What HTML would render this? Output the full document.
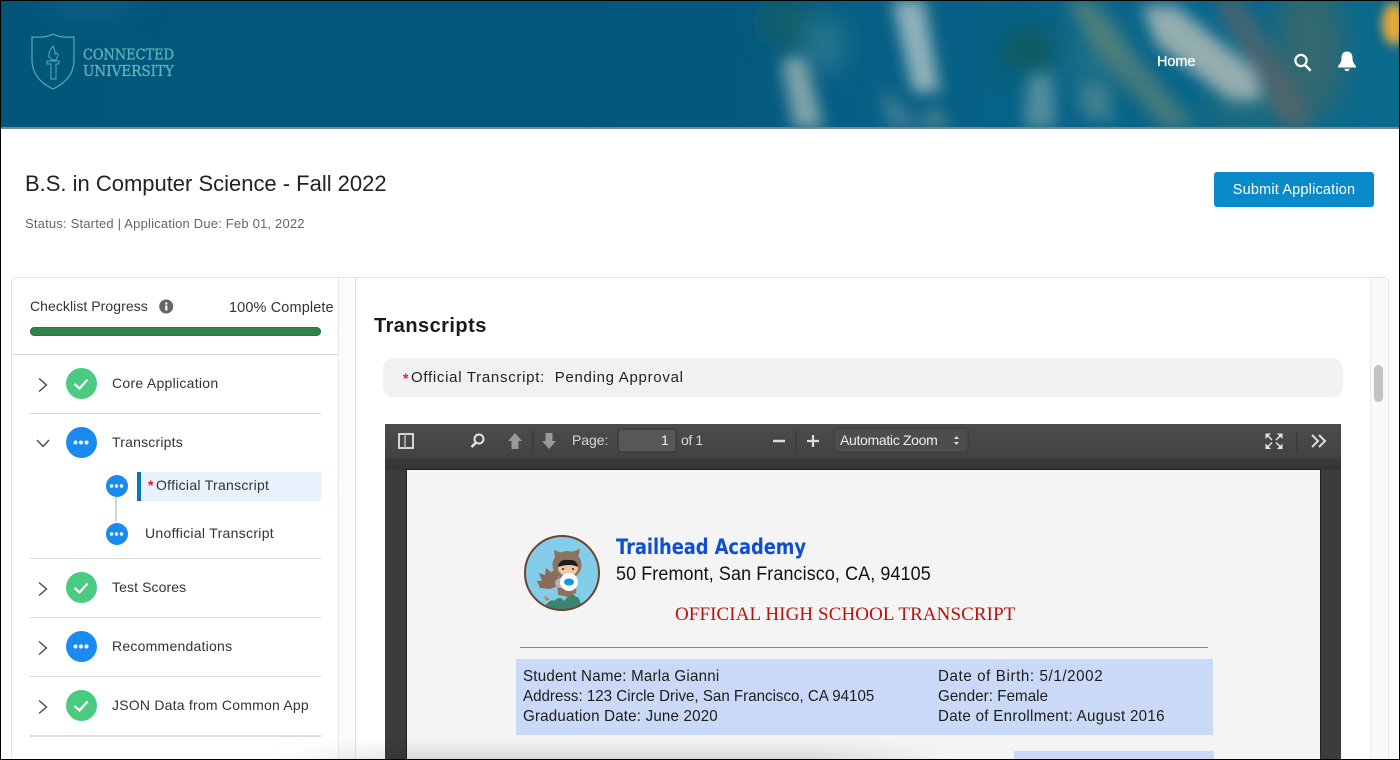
<!DOCTYPE html>
<html><head><meta charset="utf-8"><title>Connected University</title>
<style>
html,body{margin:0;padding:0;background:#fff}
#p{position:relative;width:1400px;height:760px;overflow:hidden;background:#fff;font-family:"Liberation Sans",sans-serif;color:#2b2b2b}
.a{position:absolute}
.t{position:absolute;white-space:nowrap;line-height:1}
.sb{font-size:14px;color:#333;letter-spacing:.28px}
.ln{position:absolute;left:30px;width:291px;height:1px;background:#dcdcdc}
.c{position:absolute;border-radius:50%}
.pdf{font-size:16px;color:#1c1c1c;transform:scaleX(.945);transform-origin:0 0}
.tb{color:#d8d8d8;font-size:14px}
</style></head><body><div id="p">

<svg class="a" style="left:0;top:0" width="1400" height="128" viewBox="0 0 1400 128">
<defs>
<linearGradient id="g" x1="0" x2="1" y1="0" y2="0"><stop offset="0" stop-color="#04557a"/><stop offset=".5" stop-color="#04577d"/><stop offset=".62" stop-color="#065f85"/><stop offset="1" stop-color="#0a6a8c"/></linearGradient>
<filter id="b1" x="-50%" y="-50%" width="200%" height="200%"><feGaussianBlur stdDeviation="7.5"/></filter>
<filter id="b2" x="-50%" y="-50%" width="200%" height="200%"><feGaussianBlur stdDeviation="14"/></filter>
<filter id="b3" x="-80%" y="-50%" width="260%" height="200%"><feGaussianBlur stdDeviation="5"/></filter>
</defs>
<rect width="1400" height="128" fill="url(#g)"/>
<ellipse cx="90" cy="8" rx="50" ry="14" fill="#0f6c85" opacity=".5" filter="url(#b2)"/>
<g filter="url(#b2)">
<ellipse cx="785" cy="22" rx="24" ry="24" fill="#1a5f5a" opacity=".7"/>
<ellipse cx="1028" cy="50" rx="26" ry="24" fill="#15574e" opacity=".75"/>
<ellipse cx="825" cy="45" rx="18" ry="28" fill="#3c8a96" opacity=".7"/>
<ellipse cx="1095" cy="55" rx="25" ry="50" fill="#3b7f86" opacity=".45"/>
<ellipse cx="1310" cy="50" rx="35" ry="70" fill="#50685c" opacity=".6"/>
<ellipse cx="1240" cy="110" rx="35" ry="25" fill="#336f72" opacity=".5"/>
</g>
<g filter="url(#b1)">
<path d="M892 0L924 0L940 92L913 92Z" fill="#a8c0c2" opacity=".85"/>
<path d="M1142 6L1176 6L1254 70L1262 100L1230 100L1156 44Z" fill="#a4b5b3" opacity=".9"/>
<path d="M781 60L805 56L824 128L794 128Z" fill="#9cb5b2" opacity=".8"/>
<path d="M1028 76L1052 72L1056 128L1024 128Z" fill="#7ba4a9" opacity=".65"/>
<path d="M1078 85L1107 85L1114 122L1084 118Z" fill="#5d8f96" opacity=".6"/>
<path d="M925 128L880 85L888 128Z" fill="#8aa6a6" opacity=".4"/>
<path d="M922 128L932 105L952 128Z" fill="#a2a98a" opacity=".5"/>
<path d="M1065 0L1092 0L1162 85L1197 128L1163 128L1103 60Z" fill="#7d8f72" opacity=".5"/>
<path d="M1213 0L1242 0L1297 90L1314 128L1283 128Z" fill="#74655c" opacity=".55"/>
</g>
<ellipse cx="1394" cy="24" rx="12" ry="21" fill="#e8a93a" filter="url(#b3)"/>
<path d="M32 37Q46 38 53 34Q60 38 74 37L74 60Q74 79 53 89Q32 79 32 60Z" fill="none" stroke="#53adb0" stroke-width="1.200"/>
<path d="M53 46Q48 52 49 57L52 60L56 60L58 55Q57 52 55 54Q55 50 53 46Z" fill="none" stroke="#53adb0" stroke-width="1"/>
<path d="M47 61H59V64H56V79H51V64H47Z" fill="none" stroke="#53adb0" stroke-width="1"/>
<text x="83" y="59.500" font-family="'DejaVu Serif',serif" font-size="15" fill="#5ab6b9" stroke="#5ab6b9" stroke-width=".35" textLength="91" lengthAdjust="spacingAndGlyphs">CONNECTED</text>
<text x="83" y="76" font-family="'DejaVu Serif',serif" font-size="15" fill="#5ab6b9" stroke="#5ab6b9" stroke-width=".35" textLength="91" lengthAdjust="spacingAndGlyphs">UNIVERSITY</text>
<circle cx="1301" cy="60.500" r="5.600" fill="none" stroke="#fff" stroke-width="2.200"/>
<path d="M1305 65L1310 70" stroke="#fff" stroke-width="2.400" stroke-linecap="round"/>
<path d="M1347 51.500C1351 51.500 1352.500 54.500 1352.500 58C1352.500 62 1354 64 1356 66V67.500H1338V66C1340 64 1341.500 62 1341.500 58C1341.500 54.500 1343 51.500 1347 51.500Z" fill="#fff"/>
<path d="M1344.500 68.700H1349.500A2.500 2.500 0 0 1 1344.500 68.700Z" fill="#fff"/>
</svg>
<div class="t" style="left:1157px;top:55px;font-size:14.5px;color:#fff;letter-spacing:-.1px;-webkit-text-stroke:.25px #fff">Home</div>
<div class="a" style="left:0;top:127px;width:1400px;height:1.5px;background:#7b858b"></div>

<div class="t" style="left:25px;top:173px;font-size:22px;color:#222;letter-spacing:-.01px">B.S. in Computer Science - Fall 2022</div>
<div class="t" style="left:25px;top:217px;font-size:13px;color:#666;letter-spacing:.19px">Status: Started | Application Due: Feb 01, 2022</div>
<div class="a" style="left:1214px;top:172px;width:160px;height:35px;background:#0a8ac8;border-radius:3px;color:#fff;font-size:14.5px;line-height:37px;text-align:center;letter-spacing:.18px">Submit Application</div>

<!-- panel frame -->
<div class="a" style="left:11px;top:277px;width:1378px;height:500px;border:1.5px solid #e2e2e2;border-radius:5px;box-sizing:border-box"></div>
<div class="a" style="left:338px;top:278px;width:1px;height:482px;background:#e8e8e8"></div>
<div class="a" style="left:339px;top:278px;width:16px;height:482px;background:#fbfbfb"></div>
<div class="a" style="left:355px;top:278px;width:1px;height:482px;background:#e2e2e2"></div>
<div class="a" style="left:1370px;top:278px;width:1px;height:482px;background:#ececec"></div>
<div class="a" style="left:1371px;top:278px;width:16px;height:482px;background:#fafafa"></div>
<div class="a" style="left:1374px;top:365px;width:9px;height:37px;background:#c2c2c2;border-radius:4.5px"></div>

<!-- sidebar -->
<div class="t sb" style="left:30px;top:299px;letter-spacing:.06px">Checklist Progress</div>
<svg class="a" style="left:159px;top:299px" width="15" height="15"><circle cx="7.200" cy="7.500" r="7" fill="#666"/><rect x="6.200" y="6.500" width="2.200" height="5" fill="#fff"/><rect x="6.200" y="3.500" width="2.200" height="2" fill="#fff"/></svg>
<div class="t sb" style="left:229px;top:301px;letter-spacing:.12px;font-size:14.5px">100% Complete</div>
<div class="a" style="left:30px;top:327px;width:291px;height:9px;background:#2e844a;border-radius:4.5px;box-shadow:inset 0 0 0 1px #27793f"></div>
<div class="a" style="left:12px;top:354px;width:326px;height:1px;background:#dcdcdc"></div>

<svg class="a" style="left:0;top:355px" width="340" height="405" viewBox="0 355 340 405" fill="none" stroke="#4a4a4a" stroke-width="1.400">
<path d="M39 378.500L46.500 385L39 391.500"/>
<path d="M37 440L43 446.500L49 440"/>
<path d="M39 582.500L46.500 589L39 595.500"/>
<path d="M39 641.500L46.500 648L39 654.500"/>
<path d="M39 700.500L46.500 707L39 713.500"/>
<path d="M116 497V522" stroke="#d4d4d4" stroke-width="2"/>
</svg>

<div class="c" style="left:65.500px;top:368px;width:31px;height:31px;background:#4bca81"></div>
<div class="c" style="left:65.500px;top:427px;width:31px;height:31px;background:#1b8aee"></div>
<div class="c" style="left:65.500px;top:572px;width:31px;height:31px;background:#4bca81"></div>
<div class="c" style="left:65.500px;top:631px;width:31px;height:31px;background:#1b8aee"></div>
<div class="c" style="left:65.500px;top:690px;width:31px;height:31px;background:#4bca81"></div>
<div class="c" style="left:105.500px;top:475px;width:22px;height:22px;background:#1b8aee"></div>
<div class="c" style="left:105.500px;top:523px;width:22px;height:22px;background:#1b8aee"></div>

<svg class="a" style="left:0;top:355px" width="340" height="405" viewBox="0 355 340 405" fill="none" stroke="#fff" stroke-width="2.200">
<path d="M74.500 384L79.500 388.500L87.500 379.500"/>
<path d="M74.500 588L79.500 592.500L87.500 583.500"/>
<path d="M74.500 706L79.500 710.500L87.500 701.500"/>
<g fill="#fff" stroke="none">
<circle cx="75.500" cy="442.500" r="2"/><circle cx="81" cy="442.500" r="2"/><circle cx="86.500" cy="442.500" r="2"/>
<circle cx="75.500" cy="646.500" r="2"/><circle cx="81" cy="646.500" r="2"/><circle cx="86.500" cy="646.500" r="2"/>
<circle cx="111.500" cy="486" r="1.700"/><circle cx="116.500" cy="486" r="1.700"/><circle cx="121.500" cy="486" r="1.700"/>
<circle cx="111.500" cy="534" r="1.700"/><circle cx="116.500" cy="534" r="1.700"/><circle cx="121.500" cy="534" r="1.700"/>
</g>
</svg>

<div class="t sb" style="left:112px;top:376px">Core Application</div>
<div class="ln" style="top:413px"></div>
<div class="t sb" style="left:112px;top:435px;letter-spacing:.2px">Transcripts</div>
<div class="a" style="left:137px;top:472px;width:184px;height:29px;background:#e8f2fc"></div>
<div class="a" style="left:137px;top:472px;width:4px;height:29px;background:#0a76b4"></div>
<div class="t sb" style="left:148px;top:478px;color:#e8132c;font-weight:700">*</div>
<div class="t sb" style="left:156px;top:478px">Official Transcript</div>
<div class="t sb" style="left:145px;top:526px;letter-spacing:.3px">Unofficial Transcript</div>
<div class="ln" style="top:558px"></div>
<div class="t sb" style="left:112px;top:580px;letter-spacing:.1px">Test Scores</div>
<div class="ln" style="top:617px"></div>
<div class="t sb" style="left:112px;top:639px;letter-spacing:.24px">Recommendations</div>
<div class="ln" style="top:676px"></div>
<div class="t sb" style="left:112px;top:698px;letter-spacing:.22px">JSON Data from Common App</div>
<div class="ln" style="top:735px;height:1.5px"></div>

<!-- main -->
<div class="t" style="left:374px;top:316px;font-size:20px;font-weight:700;color:#1a1a1a;letter-spacing:.45px">Transcripts</div>
<div class="a" style="left:383px;top:358px;width:960px;height:39px;background:#f1f1f1;border-radius:11px"></div>
<div class="t" style="left:403px;top:371px;font-size:14px;color:#e8132c;font-weight:700">*</div>
<div class="t" style="left:411px;top:370px;font-size:15px;color:#222;letter-spacing:.71px">Official Transcript:&nbsp; Pending Approval</div>

<!-- pdf viewer -->
<div class="a" style="left:385px;top:424px;width:956px;height:336px;background:#3c3c3c"></div>
<div class="a" style="left:385px;top:424px;width:956px;height:36px;background:linear-gradient(#4c4c4c,#424242);border-bottom:1px solid #353535;box-sizing:border-box"></div>
<div class="a" style="left:385px;top:460px;width:956px;height:10px;background:linear-gradient(#3a3a3a,#333)"></div>
<div class="a" style="left:407px;top:470px;width:913px;height:290px;background:#f4f4f4;box-shadow:0 0 0 1px #222"></div>

<svg class="a" style="left:385px;top:424px" width="956" height="36" viewBox="385 424 956 36" fill="none">
<rect x="399" y="434" width="14" height="14" stroke="#e4e4e4" stroke-width="1.800"/><path d="M405 434V448" stroke="#bbb" stroke-width="1.500"/>
<circle cx="479" cy="439" r="4.500" stroke="#e4e4e4" stroke-width="2"/><path d="M475.500 443L471.500 447" stroke="#e4e4e4" stroke-width="2.500"/>
<path d="M515 433L522 441H518.500V449H511.500V441H508Z" fill="#999"/>
<path d="M533 431V451" stroke="#333"/>
<path d="M549 449L542 441H545.500V433H552.500V441H556Z" fill="#999"/>
<path d="M773 441H785" stroke="#ddd" stroke-width="2.500"/>
<path d="M796 431V451" stroke="#333"/>
<path d="M807 441H819M813 435V447" stroke="#ddd" stroke-width="2.200"/>
<rect x="618" y="429" width="58" height="23" rx="3" fill="#575757" stroke="#333"/>
<rect x="834" y="428" width="134" height="24" rx="3" fill="#4d4d4d" stroke="#3a3a3a"/>
<path d="M954 439L956.500 436L959 439ZM954 442L956.500 445L959 442Z" fill="#ddd"/>
<path d="M1297 432V451" stroke="#333"/>
<path d="M1265.500 433.500H1271L1265.500 439ZM1282.500 433.500H1277L1282.500 439ZM1265.500 449H1271L1265.500 443.500ZM1282.500 449H1277L1282.500 443.500Z" fill="#e4e4e4"/>
<path d="M1267.500 435.500L1272 440M1280.500 435.500L1276 440M1267.500 447L1272 442.500M1280.500 447L1276 442.500" stroke="#e4e4e4" stroke-width="1.500"/>
<path d="M1312 435L1318 441L1312 447M1319 435L1325 441L1319 447" stroke="#ddd" stroke-width="2"/>
</svg>
<div class="t tb" style="left:572px;top:433px;letter-spacing:-.05px">Page:</div>
<div class="t tb" style="left:661px;top:433px;color:#eee">1</div>
<div class="t tb" style="left:681px;top:433px;letter-spacing:-.4px">of 1</div>
<div class="t tb" style="left:840px;top:433px;color:#eee;letter-spacing:-.32px">Automatic Zoom</div>

<!-- document -->
<svg class="a" style="left:524px;top:533px" width="78" height="80" viewBox="0 0 78 80">
<defs><clipPath id="cp"><circle cx="38" cy="40" r="37"/></clipPath></defs>
<circle cx="38" cy="40" r="37" fill="#84cdea"/>
<g clip-path="url(#cp)">
<path d="M16 55L13 48L18 48L15 40L21 42L22 35L27 39L33 36L36 52L26 56Z" fill="#8a6b58"/>
<path d="M33 44L53 44L52 60L44 64L34 62Z" fill="#8e7260"/>
<path d="M31 25L30 17L38 20ZM54 25L56 16L47 19Z" fill="#8e7260"/>
<ellipse cx="43" cy="32" rx="14.500" ry="14" fill="#8e7260"/>
<ellipse cx="44" cy="35" rx="10" ry="8" fill="#f0c7a4"/>
<path d="M34 34Q35 26 44 27Q53 26 54 34Q46 30 34 34Z" fill="#1c1c1c"/>
<circle cx="39" cy="36" r="1" fill="#222"/><circle cx="49" cy="36" r="1" fill="#222"/>
<ellipse cx="37" cy="50" rx="6" ry="5" fill="#b4b4b4"/>
<circle cx="45" cy="49" r="9" fill="#fff"/>
<ellipse cx="45" cy="49" rx="5" ry="3.500" fill="#1496dc"/>
<path d="M16 80Q26 64 30 68Q36 62 40 68Q48 58 52 64Q56 62 58 80Z" fill="#3f8270"/>
<path d="M20 63L26 66L22 68Z" fill="#c9803a"/>
</g>
<circle cx="38" cy="40" r="37" fill="none" stroke="#6e4430" stroke-width="2"/>
</svg>
<div class="t" style="left:616px;top:537px;font-size:21px;color:#0e4fd1;font-weight:700;font-family:'DejaVu Sans',sans-serif;letter-spacing:-.1px;transform:scaleX(.853);transform-origin:0 0">Trailhead Academy</div>
<div class="t" style="left:616px;top:565px;font-size:19px;color:#111;letter-spacing:.12px;transform:scaleX(.943);transform-origin:0 0">50 Fremont, San Francisco, CA, 94105</div>
<div class="t" style="left:675px;top:605px;font-size:19px;color:#b8120c;font-family:'Liberation Serif',serif;letter-spacing:.09px">OFFICIAL HIGH SCHOOL TRANSCRIPT</div>
<div class="a" style="left:520px;top:647px;width:688px;height:1px;background:#888"></div>
<div class="a" style="left:516px;top:659px;width:697px;height:76px;background:#c9d9f7"></div>
<div class="a" style="left:1014px;top:751px;width:200px;height:9px;background:#c9d9f7"></div>
<div class="t pdf" style="left:523px;top:669px;letter-spacing:.23px">Student Name: Marla Gianni</div>
<div class="t pdf" style="left:523px;top:689px">Address: 123 Circle Drive, San Francisco, CA 94105</div>
<div class="t pdf" style="left:523px;top:709px;letter-spacing:.2px">Graduation Date: June 2020</div>
<div class="t pdf" style="left:938px;top:669px;letter-spacing:.64px">Date of Birth: 5/1/2002</div>
<div class="t pdf" style="left:938px;top:689px;letter-spacing:.06px">Gender: Female</div>
<div class="t pdf" style="left:938px;top:709px;letter-spacing:.31px">Date of Enrollment: August 2016</div>

<!-- bottom shadow -->
<div class="a" style="left:270px;top:738px;width:680px;height:22px;background:linear-gradient(rgba(0,0,0,0),rgba(0,0,0,.1));-webkit-mask-image:linear-gradient(90deg,transparent,#000 18%,#000 80%,transparent);mask-image:linear-gradient(90deg,transparent,#000 18%,#000 80%,transparent)"></div>

<!-- screenshot border -->
<div class="a" style="left:0;top:0;width:1400px;height:1px;background:#000"></div>
<div class="a" style="left:0;top:759px;width:1400px;height:1px;background:#000"></div>
<div class="a" style="left:0;top:0;width:1px;height:760px;background:#000"></div>
<div class="a" style="left:1399px;top:0;width:1px;height:760px;background:#000"></div>
</div></body></html>
